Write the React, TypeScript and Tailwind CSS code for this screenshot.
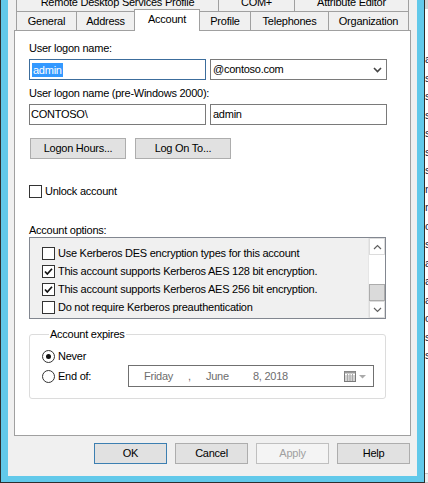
import React from 'react';

const font = "font-['Liberation_Sans',Arial,sans-serif] tracking-[-0.25px]";

function CheckBox({ checked }: { checked?: boolean }) {
  return (
    <span className="w-[13px] h-[13px] border border-[#333333] bg-white flex items-center justify-center shrink-0">
      {checked && (
        <svg width="11" height="11" viewBox="0 0 11 11">
          <path d="M2 5.5 L4.3 8 L9 2.8" fill="none" stroke="#111" strokeWidth="1.7" />
        </svg>
      )}
    </span>
  );
}

function Radio({ checked }: { checked?: boolean }) {
  return (
    <span className="w-[13px] h-[13px] rounded-full border border-[#333333] bg-white flex items-center justify-center shrink-0">
      {checked && <span className="w-[5px] h-[5px] rounded-full bg-[#111]" />}
    </span>
  );
}

function Btn({ label, w, disabled, primary }: { label: string; w: string; disabled?: boolean; primary?: boolean }) {
  const base = 'h-[21px] flex items-center justify-center border text-[11px] leading-none';
  let tone = 'bg-[#e1e1e1] border-[#adadad] text-black';
  if (primary) tone = 'bg-[#e1e1e1] border-[#3c7fb1] text-black';
  if (disabled) tone = 'bg-[#f4f4f4] border-[#bfbfbf] text-[#a0a0a0]';
  return <button className={`${base} ${tone} ${w}`}>{label}</button>;
}

const backTabs = [
  { label: 'Remote Desktop Services Profile', w: 'w-[202px]' },
  { label: 'COM+', w: 'w-[76px]' },
  { label: 'Attribute Editor', w: 'w-[115px] border-r' },
];

const frontTabs = [
  { label: 'General', w: 'w-[60px] border-l' },
  { label: 'Address', w: 'w-[58px] border-l' },
  { label: 'Account', w: 'w-[66px]', active: true },
  { label: 'Profile', w: 'w-[50px]' },
  { label: 'Telephones', w: 'w-[78px] border-l' },
  { label: 'Organization', w: 'w-[81px] border-l border-r' },
];

const options = [
  { label: 'Use Kerberos DES encryption types for this account', checked: false },
  { label: 'This account supports Kerberos AES 128 bit encryption.', checked: true },
  { label: 'This account supports Kerberos AES 256 bit encryption.', checked: true },
  { label: 'Do not require Kerberos preauthentication', checked: false },
];

const sideLetters = ['a', 's', 's', 's', 's', 's', 's', 'n', 'r', 'c', 's', 'a', 'a', 'a', 'c', 's', 's'];

export default function App() {
  return (
    <div className={`w-[428px] h-[483px] flex bg-white overflow-hidden text-black ${font}`}>
      {/* window frame */}
      <div className="w-[425px] h-[483px] bg-[#2e2e2e] px-px pb-px shrink-0">
        <div className="h-[482px] bg-[#62c9ea] px-[7px] pb-[6px]">
          <div className="h-[476px] bg-[#f0f0f0] px-[6px] flex flex-col">
            {/* back tab row */}
            <div className="h-[11px] overflow-hidden flex pl-[2px]">
              {backTabs.map((t) => (
                <div
                  key={t.label}
                  className={`${t.w} h-[11px] border-l border-[#a0a0a0] flex items-end justify-center text-[11px] leading-[13px] pb-[2px]`}
                >
                  <span className="whitespace-nowrap">{t.label}</span>
                </div>
              ))}
            </div>

            {/* front tab row */}
            <div className="-mt-[2px] h-[21px] flex items-end pl-[2px] relative z-10">
              {frontTabs.map((t) =>
                t.active ? (
                  <div
                    key={t.label}
                    className="w-[66px] h-[22px] -mb-px bg-white border-l border-t border-r border-[#a0a0a0] flex justify-center pt-[3px] text-[11px] leading-[13px]"
                  >
                    {t.label}
                  </div>
                ) : (
                  <div
                    key={t.label}
                    className={`${t.w} h-[19px] border-t border-[#a0a0a0] bg-[#f0f0f0] flex justify-center pt-[3px] text-[11px] leading-[13px]`}
                  >
                    {t.label}
                  </div>
                )
              )}
            </div>

            {/* tab page */}
            <div className="w-[397px] h-[406px] bg-white border border-[#a0a0a0] pl-[14px] flex flex-col text-[11px]">
              <div className="mt-[10px] leading-[15px]">User logon name:</div>
              <div className="mt-[3px] flex gap-[4px]">
                <div className="w-[177px] h-[21px] border border-[#3c6d9c] flex items-center pl-[2px]">
                  <span className="bg-[#3399ff] text-white leading-[14px] px-px">admin</span>
                </div>
                <div className="w-[177px] h-[21px] border border-[#7a7a7a] bg-white flex items-center pl-[2px] pr-[4px]">
                  <span className="flex-1">@contoso.com</span>
                  <svg width="9" height="6" viewBox="0 0 9 6">
                    <path d="M1 1 L4.5 4.5 L8 1" fill="none" stroke="#444" strokeWidth="1.6" />
                  </svg>
                </div>
              </div>

              <div className="mt-[6px] leading-[15px]">User logon name (pre-Windows 2000):</div>
              <div className="mt-[3px] flex gap-[4px]">
                <div className="w-[177px] h-[21px] border border-[#7a7a7a] flex items-center pl-[1px]">CONTOSO\</div>
                <div className="w-[177px] h-[21px] border border-[#7a7a7a] flex items-center pl-[2px]">admin</div>
              </div>

              <div className="mt-[13px] flex gap-[9px] ml-px">
                <Btn label="Logon Hours..." w="w-[96px]" />
                <Btn label="Log On To..." w="w-[96px]" />
              </div>

              <div className="mt-[25px] h-[15px] flex items-center gap-[3px]">
                <CheckBox />
                <span>Unlock account</span>
              </div>

              <div className="mt-[24px] leading-[14px]">Account options:</div>
              <div className="w-[357px] h-[82px] border border-[#828790] bg-[#f0f0f0] flex">
                <div className="flex-1 pl-[12px] pt-[6px] flex flex-col">
                  {options.map((o) => (
                    <div key={o.label} className="h-[18px] flex items-center gap-[3px]">
                      <CheckBox checked={o.checked} />
                      <span className="whitespace-nowrap">{o.label}</span>
                    </div>
                  ))}
                </div>
                <div className="w-[17px] bg-white flex flex-col border-l border-[#e6e6e6]">
                  <div className="h-[17px] border border-[#dcdcdc] flex items-center justify-center">
                    <svg width="9" height="6" viewBox="0 0 9 6">
                      <path d="M1 5 L4.5 1.5 L8 5" fill="none" stroke="#606060" strokeWidth="1.2" />
                    </svg>
                  </div>
                  <div className="flex-1" />
                  <div className="h-[17px] bg-[#dadada] border border-[#acacac]" />
                  <div className="h-[17px] border border-[#dcdcdc] flex items-center justify-center">
                    <svg width="9" height="6" viewBox="0 0 9 6">
                      <path d="M1 1 L4.5 4.5 L8 1" fill="none" stroke="#606060" strokeWidth="1.2" />
                    </svg>
                  </div>
                </div>
              </div>

              <fieldset className="mt-[9px] w-[357px] border border-[#dcdcdc] rounded-[3px] pl-[12px] pr-[11px] pb-[11px]">
                <legend className="ml-[7px] px-px leading-[13px]">Account expires</legend>
                <div className="mt-[8px] h-[15px] flex items-center gap-[3px]">
                  <Radio checked />
                  <span>Never</span>
                </div>
                <div className="mt-[1px] flex items-center">
                  <div className="w-[86px] flex items-center gap-[3px]">
                    <Radio />
                    <span>End of:</span>
                  </div>
                  <div className="w-[246px] h-[22px] border border-[#707070] bg-white flex items-center pl-[15px] pr-[6px] text-[#6d6d6d]">
                    <span className="w-[44px]">Friday</span>
                    <span className="w-[18px]">,</span>
                    <span className="w-[47px]">June</span>
                    <span className="flex-1">8, 2018</span>
                    <svg width="12" height="11" viewBox="0 0 12 11" className="mr-[1px]">
                      <rect x="0.5" y="0.5" width="11" height="10" fill="#fff" stroke="#7a7a7a" />
                      <rect x="0.5" y="0.5" width="11" height="2" fill="#9a9a9a" />
                      <path d="M3.5 3 V10 M6 3 V10 M8.5 3 V10 M1 5 H11 M1 7 H11 M1 9 H11" stroke="#a8a8a8" strokeWidth="1" />
                    </svg>
                    <svg width="9" height="5" viewBox="0 0 9 5" className="ml-[1px]">
                      <path d="M1 1 H8 L4.5 4.5 Z" fill="#aaaaaa" />
                    </svg>
                  </div>
                </div>
              </fieldset>
            </div>

            {/* dialog buttons */}
            <div className="mt-[7px] flex justify-end gap-[8px] pr-px">
              <Btn label="OK" w="w-[73px]" primary />
              <Btn label="Cancel" w="w-[73px]" />
              <Btn label="Apply" w="w-[73px]" disabled />
              <Btn label="Help" w="w-[73px]" />
            </div>
          </div>
        </div>
      </div>

      {/* window behind, peeking out */}
      <div className="w-[3px] h-[483px] overflow-hidden flex flex-col bg-white">
        <div className="h-[9px] bg-[#d4d4d4] shrink-0" />
        <div className="mt-[41px] flex flex-col text-[11px] leading-[18.5px] text-[#1b1b3a]">
          {sideLetters.map((l, i) => (
            <span key={i}>{l}</span>
          ))}
        </div>
        <div className="flex-1" />
        <div className="h-[10px] border-t border-b border-[#c8c8c8] bg-[#eeeeee] shrink-0" />
      </div>
    </div>
  );
}
